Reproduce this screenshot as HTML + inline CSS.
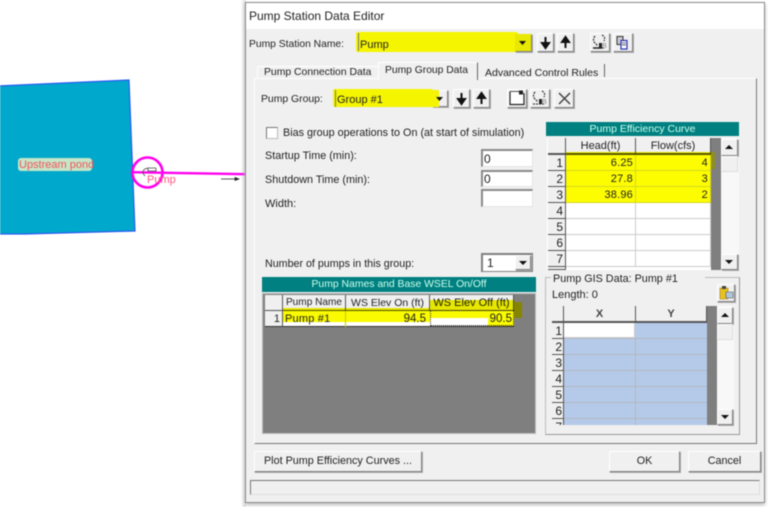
<!DOCTYPE html>
<html><head><meta charset="utf-8"><style>
html,body{margin:0;padding:0;background:#fff}
#r{position:relative;width:768px;height:507px;overflow:hidden;background:#fff;font:10.8px/14px "Liberation Sans",sans-serif;color:#222;filter:blur(.5px)}
#r div,#r svg{position:absolute}
.t{white-space:nowrap;line-height:14px;margin-top:1px}
.b{background:#f0f0f0;border:1px solid;border-color:#fff #808080 #808080 #fff;box-shadow:1px 1px 0 #aaa;box-sizing:border-box;text-align:center;margin-top:0}
.i{background:#fff;border:1px solid;border-color:#8a8a8a #e4e4e4 #e4e4e4 #8a8a8a;border-width:2px 1px 1px 2px;box-sizing:border-box;margin-top:0;font-size:12px}
.y{background:#f5f500}
.tb{background:#008080;color:#cfe;text-align:center;box-sizing:border-box;line-height:14px;font-size:10.4px}
.h{background:#f0f0f0;border-right:1px solid #555;border-bottom:2px solid #555;box-sizing:border-box;text-align:center;line-height:17px;font-size:11px;white-space:nowrap}
.n{background:#f0f0f0;border-right:1px solid #555;border-bottom:1px solid #555;box-sizing:border-box;text-align:right;padding-right:2px;line-height:17px;font-size:12px}
.c{box-sizing:border-box;border-right:1px solid #ccc;border-bottom:1px solid #ccc;text-align:right;padding-right:2px;line-height:17px;font-size:11px;letter-spacing:.2px}
.e{background:#fdfd00;border-color:#d6d620}
</style></head><body><div id="r">

<div style="left:241px;top:0;width:5px;height:507px;background:linear-gradient(90deg,#fff,#d8d8d8)"></div>
<svg style="left:0;top:0" width="246" height="240" viewBox="0 0 246 240">
<polygon points="-2,86 129,80 135,231 25,234 -2,234" fill="#00a8cc" stroke="#2a5cf0" stroke-width="1.2"/>
<line x1="131" y1="172.200" x2="246" y2="174.200" stroke="#ff00ee" stroke-width="2.400"/>
<circle cx="147.500" cy="172.500" r="15" fill="none" stroke="#ff00ee" stroke-width="2.600"/>
<path d="M156 168h-8q-5 1-5 4q0 2 2 4M148 168v3h8v-3" fill="none" stroke="#444" stroke-width=".8"/>
<path d="M221 179h17M235 177.500l4 1.500-4 1.500z" stroke="#222" stroke-width=".7" fill="#222"/>
</svg>
<div style="left:18px;top:158px;width:74px;height:13px;background:#c5e6c8;border-radius:3px"></div>
<div class="t" style="left:19px;top:157px;color:#f2555a;font-size:11px">Upstream pond</div>
<div class="t" style="left:147px;top:172px;color:#ff5580;font-size:11px">Pump</div>

<!-- dialog -->
<div style="left:245px;top:2px;width:520px;height:501px;background:#f0f0f0;border:1px solid #8a8a8a;box-sizing:border-box;box-shadow:0 2px 4px #bbb"></div>
<div style="left:246px;top:3px;width:518px;height:26px;background:#fff"></div>
<div class="t" style="left:249px;top:9px;font-size:12px;color:#222;margin-top:0">Pump Station Data Editor</div>

<div class="t" style="left:249px;top:37px;font-size:10.300px">Pump Station Name:</div>
<div class="y" style="left:356px;top:32px;width:162px;height:20px;border-radius:2px"></div>
<div style="left:358px;top:33px;width:1px;height:18px;background:#777"></div>
<div class="t" style="left:360px;top:37px;font-size:11px">Pump</div>
<div class="b" style="left:515px;top:34px;width:17px;height:18px;background:#e8e800;border-color:#e8e800 #808080 #808080 #e8e800"></div>
<svg style="left:519px;top:41px" width="8" height="5"><path d="M0 0h7l-3.500 4z" fill="#111"/></svg>
<div class="b" style="left:537px;top:33px;width:17px;height:19px"></div>
<div class="b" style="left:557px;top:33px;width:17px;height:19px"></div>
<svg style="left:537px;top:33px" width="38" height="19"><path d="M8.500 4v7M5 10h7l-3.500 5z M28.500 15v-7M25 9h7l-3.500-5z" stroke="#111" stroke-width="2" fill="#111"/></svg>
<div class="b" style="left:590px;top:33px;width:20px;height:19px"></div>
<div class="b" style="left:613px;top:33px;width:20px;height:19px"></div>
<svg style="left:590px;top:33px" width="44" height="19"><path d="M5 3q-3 4 0 7l3 3M12 2q4 2 2 6M3 15h11" fill="none" stroke="#222" stroke-width="1.100" stroke-dasharray="2 1"/><path d="M3 15h9" stroke="#222" stroke-width="1.500"/><path d="M9 10h3v5H9z" fill="#222"/><text x="12" y="15" font-size="7" font-family="Liberation Sans" fill="#888">B</text><path d="M27 3.500h6v8h-6z" fill="#ccc" stroke="#333"/><path d="M31 7.500h6v8.500h-6z" fill="#fff" stroke="#2a35b0" stroke-width="1.200"/><path d="M32 10h4M32 12h4" stroke="#334" stroke-width=".7"/></svg>

<!-- tabs -->
<div style="left:254px;top:78px;width:503px;height:366px;border:1px solid;border-color:#fff #777 #777 #fff;box-sizing:border-box"></div>
<div style="left:257px;top:66px;width:121px;height:13px;border-top:1px solid #fff;border-left:1px solid #fff;box-sizing:border-box"></div>
<div class="t" style="left:264px;top:65px;font-size:10.400px">Pump Connection Data</div>
<div style="left:378px;top:62px;width:100px;height:18px;background:#f0f0f0;border-top:1px solid #fff;border-left:1px solid #fff;border-right:1px solid #666;box-sizing:border-box"></div>
<div class="t" style="left:385px;top:63px;font-size:10.300px">Pump Group Data</div>
<div class="t" style="left:485px;top:65px;font-size:10.500px">Advanced Control Rules</div>
<div style="left:604px;top:64px;width:1px;height:13px;background:#666"></div>

<div class="t" style="left:261px;top:92px;font-size:10.400px">Pump Group:</div>
<div class="y" style="left:333px;top:89px;width:100px;height:18px;border-radius:2px"></div>
<div style="left:335px;top:90px;width:1px;height:17px;background:#777"></div>
<div class="t" style="left:337px;top:92px;font-size:11px">Group #1</div>
<div class="b" style="left:432px;top:90px;width:16px;height:17px"></div>
<div class="y" style="left:432px;top:90px;width:7px;height:17px"></div>
<svg style="left:436px;top:97px" width="8" height="5"><path d="M0 0h7l-3.500 4z" fill="#111"/></svg>
<div class="b" style="left:453px;top:89px;width:17px;height:19px"></div>
<div class="b" style="left:473px;top:89px;width:17px;height:19px"></div>
<svg style="left:453px;top:89px" width="38" height="19"><path d="M8.500 4v7M5 10h7l-3.500 5z M28.500 15v-7M25 9h7l-3.500-5z" stroke="#111" stroke-width="2" fill="#111"/></svg>
<div class="b" style="left:507px;top:89px;width:20px;height:19px"></div>
<div class="b" style="left:530px;top:89px;width:20px;height:19px"></div>
<div class="b" style="left:554px;top:89px;width:20px;height:19px"></div>
<svg style="left:507px;top:89px" width="68" height="19"><path d="M3 2.500h13v13H3z" fill="#fff"/><path d="M3 2.500v13h14V4" fill="none" stroke="#222" stroke-width="1.200"/><path d="M3 2.500h9" stroke="#555"/><path d="M12 1.500h4v4h-4z" fill="#222"/><path d="M28 3q-3 4 0 7l3 3M35 2q4 2 2 6M26 15h11" fill="none" stroke="#222" stroke-width="1.100" stroke-dasharray="2 1"/><path d="M32 10h3v5h-3z" fill="#222"/><text x="35" y="15" font-size="7" font-family="Liberation Sans" fill="#888">B</text><path d="M52 4l11 11M63 4L52 15" stroke="#444" stroke-width="1.500"/></svg>

<div style="left:266px;top:127px;width:12px;height:12px;background:#fff;border:1px solid;border-color:#777 #bbb #bbb #777;box-sizing:border-box"></div>
<div class="t" style="left:283px;top:125px">Bias group operations to On (at start of simulation)</div>
<div class="t" style="left:265px;top:148px">Startup Time (min):</div>
<div class="t" style="left:265px;top:172px">Shutdown Time (min):</div>
<div class="t" style="left:265px;top:196px;font-size:11px">Width:</div>
<div class="i t" style="left:481px;top:149px;width:52px;height:18px;padding-left:1px;line-height:16px">0</div>
<div class="i t" style="left:481px;top:170px;width:52px;height:17px;padding-left:1px;line-height:14px">0</div>
<div class="i" style="left:481px;top:189px;width:52px;height:18px"></div>
<div class="t" style="left:265px;top:256px;font-size:10.700px">Number of pumps in this group:</div>
<div class="i t" style="left:481px;top:253px;width:52px;height:19px;padding-left:4px;line-height:16px;border-color:#808080">1</div>
<div class="b" style="left:515px;top:255px;width:16px;height:15px"></div>
<svg style="left:519px;top:261px" width="9" height="5"><path d="M0 0h8l-4 4z" fill="#111"/></svg>

<!-- efficiency -->
<div class="tb" style="left:546px;top:122px;width:193px;height:14px;font-size:10.500px">Pump Efficiency Curve</div>
<div style="left:547px;top:138px;width:174px;height:132px;background:#fff"></div>
<div style="left:711px;top:138px;width:10px;height:132px;background:#7f7f7f"></div>
<div class="h" style="left:548px;top:138px;width:18px;height:17px"></div>
<div class="h" style="left:566px;top:138px;width:70px;height:17px">Head(ft)</div>
<div class="h" style="left:636px;top:138px;width:75px;height:17px">Flow(cfs)</div>
<div class="n" style="left:548px;top:155px;width:18px;height:16px">1</div>
<div class="n" style="left:548px;top:171px;width:18px;height:16px">2</div>
<div class="n" style="left:548px;top:187px;width:18px;height:16px">3</div>
<div class="n" style="left:548px;top:203px;width:18px;height:16px">4</div>
<div class="n" style="left:548px;top:219px;width:18px;height:16px">5</div>
<div class="n" style="left:548px;top:235px;width:18px;height:16px">6</div>
<div class="n" style="left:548px;top:251px;width:18px;height:16px">7</div>
<div class="n" style="left:548px;top:267px;width:18px;height:3px"></div>
<div class="c e" style="left:566px;top:155px;width:70px;height:16px">6.25</div>
<div class="c e" style="left:636px;top:155px;width:75px;height:16px">4</div>
<div class="c e" style="left:566px;top:171px;width:70px;height:16px">27.8</div>
<div class="c e" style="left:636px;top:171px;width:75px;height:16px">3</div>
<div class="c e" style="left:566px;top:187px;width:70px;height:16px">38.96</div>
<div class="c e" style="left:636px;top:187px;width:75px;height:16px">2</div>
<div class="c" style="left:566px;top:203px;width:70px;height:16px"></div>
<div class="c" style="left:636px;top:203px;width:75px;height:16px"></div>
<div class="c" style="left:566px;top:219px;width:70px;height:16px"></div>
<div class="c" style="left:636px;top:219px;width:75px;height:16px"></div>
<div class="c" style="left:566px;top:235px;width:70px;height:16px"></div>
<div class="c" style="left:636px;top:235px;width:75px;height:16px"></div>
<div class="c" style="left:566px;top:251px;width:70px;height:16px"></div>
<div class="c" style="left:636px;top:251px;width:75px;height:16px"></div>
<div style="left:711px;top:152px;width:4px;height:17px;background:#8f8f20"></div>
<div style="left:566px;top:152px;width:145px;height:3px;background:#fdfd00;mix-blend-mode:multiply"></div>
<div style="left:721px;top:138px;width:18px;height:132px;background:#f8f8f8"></div>
<div class="b" style="left:721px;top:139px;width:17px;height:17px"></div>
<div class="b" style="left:721px;top:156px;width:17px;height:16px;border-right-color:#ddd;border-bottom-color:#ddd;box-shadow:none"></div>
<div class="b" style="left:721px;top:254px;width:17px;height:16px"></div>
<svg style="left:725px;top:145px" width="10" height="5"><path d="M0 4h8L4 0z" fill="#111"/></svg>
<svg style="left:725px;top:260px" width="10" height="5"><path d="M0 0h8L4 4z" fill="#111"/></svg>

<!-- GIS -->
<div style="left:545px;top:277px;width:195px;height:158px;border:1px solid;border-color:#bbb #999 #999 #bbb;box-sizing:border-box"></div>
<div class="t" style="left:551px;top:271px;background:#f0f0f0;padding:0 2px;width:150px;font-size:10.800px">Pump GIS Data: Pump #1</div>
<div class="t" style="left:552px;top:287px;font-size:11px">Length: 0</div>
<div class="b" style="left:717px;top:284px;width:18px;height:18px"></div>
<svg style="left:717px;top:284px" width="18" height="18"><path d="M3 4h8v11H3z" fill="#e8c020" stroke="#a08010" stroke-width=".6"/><path d="M5 2h4v3H5z" fill="#444"/><path d="M9 8h7v6H9z" fill="#b0c4de" stroke="#555" stroke-width=".6"/></svg>
<div style="left:552px;top:306px;width:165px;height:119px;background:#b5c9e8"></div>
<div style="left:707px;top:306px;width:10px;height:119px;background:#7f7f7f"></div>
<div class="h" style="left:552px;top:306px;width:12px;height:17px"></div>
<div class="h" style="left:564px;top:306px;width:72px;height:17px;font-weight:bold;color:#444">X</div>
<div class="h" style="left:636px;top:306px;width:71px;height:17px;font-weight:bold;color:#444">Y</div>
<div class="n" style="left:552px;top:323px;width:12px;height:16px;padding-right:1px">1</div>
<div class="n" style="left:552px;top:339px;width:12px;height:16px;padding-right:1px">2</div>
<div class="n" style="left:552px;top:355px;width:12px;height:16px;padding-right:1px">3</div>
<div class="n" style="left:552px;top:371px;width:12px;height:16px;padding-right:1px">4</div>
<div class="n" style="left:552px;top:387px;width:12px;height:16px;padding-right:1px">5</div>
<div class="n" style="left:552px;top:403px;width:12px;height:16px;padding-right:1px">6</div>
<div class="n" style="left:552px;top:419px;width:12px;height:6px;padding-right:1px;overflow:hidden;border-bottom:0">7</div>
<div style="left:564px;top:323px;width:71px;height:15px;background:#fff;border-right:1px solid #ccc;border-bottom:1px solid #ccc;box-sizing:border-box"></div>
<div style="left:564px;top:354px;width:143px;height:1px;background:#b0b8c4"></div>
<div style="left:564px;top:370px;width:143px;height:1px;background:#b0b8c4"></div>
<div style="left:564px;top:386px;width:143px;height:1px;background:#b0b8c4"></div>
<div style="left:564px;top:402px;width:143px;height:1px;background:#b0b8c4"></div>
<div style="left:564px;top:418px;width:143px;height:1px;background:#b0b8c4"></div>
<div style="left:564px;top:338px;width:143px;height:1px;background:#b0b8c4"></div>
<div style="left:635px;top:338px;width:1px;height:87px;background:#b0b8c4"></div>
<div style="left:717px;top:306px;width:17px;height:119px;background:#f8f8f8"></div>
<div class="b" style="left:717px;top:307px;width:16px;height:17px"></div>
<div class="b" style="left:717px;top:324px;width:16px;height:16px;border-right-color:#ddd;border-bottom-color:#ddd;box-shadow:none"></div>
<div class="b" style="left:717px;top:409px;width:16px;height:16px"></div>
<svg style="left:721px;top:313px" width="10" height="5"><path d="M0 4h8L4 0z" fill="#111"/></svg>
<svg style="left:721px;top:415px" width="10" height="5"><path d="M0 0h8L4 4z" fill="#111"/></svg>

<!-- pump names -->
<div class="tb" style="left:262px;top:277px;width:274px;height:15px;line-height:16px">Pump Names and Base WSEL On/Off</div>
<div style="left:262px;top:293px;width:274px;height:141px;background:#7f7f7f;border:1px solid #bbb;box-sizing:border-box"></div>
<div class="h" style="left:265px;top:295px;width:18px;height:16px;border-bottom:1px solid #555"></div>
<div class="h" style="left:283px;top:295px;width:63px;height:16px;border-bottom:1px solid #555;line-height:16px;font-size:10.100px">Pump Name</div>
<div class="h" style="left:346px;top:295px;width:84px;height:16px;border-bottom:1px solid #555;line-height:16px;font-size:10.500px">WS Elev On (ft)</div>
<div class="h" style="left:430px;top:295px;width:84px;height:16px;border-bottom:1px solid #555;line-height:16px">WS Elev Off (ft)</div>
<div class="n" style="left:265px;top:311px;width:18px;height:16px;font-size:11px;border-bottom:1px solid #333;line-height:16px">1</div>
<div style="left:283px;top:311px;width:231px;height:16px;background:#fff;border-bottom:1px solid #333;box-sizing:border-box"></div>
<div class="y" style="left:283px;top:311px;width:147px;height:11px;background:#fafa00"></div>
<div class="y" style="left:430px;top:311px;width:84px;height:7px;background:#fafa00"></div>
<div style="left:488px;top:318px;width:26px;height:8px;background:#fafa00"></div>
<div style="left:283px;top:308px;width:147px;height:3px;background:#f5f500;mix-blend-mode:multiply"></div>
<div style="left:430px;top:300px;width:84px;height:11px;background:#f5f500;mix-blend-mode:multiply"></div>
<div style="left:514px;top:302px;width:8px;height:16px;background:#858500"></div>
<div style="left:430px;top:310px;width:84px;height:16px;border:1px dotted #333;box-sizing:border-box"></div>
<div style="left:345px;top:311px;width:1px;height:16px;background:#c8c800"></div>
<div class="t" style="left:285px;top:312px;font-size:11px;margin-top:0;letter-spacing:.2px">Pump #1</div>
<div class="t" style="left:394px;top:312px;width:32px;text-align:right;font-size:11.500px;margin-top:0">94.5</div>
<div class="t" style="left:480px;top:312px;width:32px;text-align:right;font-size:11.500px;margin-top:0">90.5</div>

<!-- bottom -->
<div class="b t" style="left:254px;top:451px;width:168px;height:21px;line-height:19px">Plot Pump Efficiency Curves ...</div>
<div class="b t" style="left:609px;top:451px;width:71px;height:21px;line-height:19px">OK</div>
<div class="b t" style="left:688px;top:451px;width:73px;height:21px;line-height:19px">Cancel</div>
<div style="left:250px;top:480px;width:510px;height:15px;border:1px solid;border-color:#777 #ddd #ddd #777;box-sizing:border-box"></div>
</div></body></html>
